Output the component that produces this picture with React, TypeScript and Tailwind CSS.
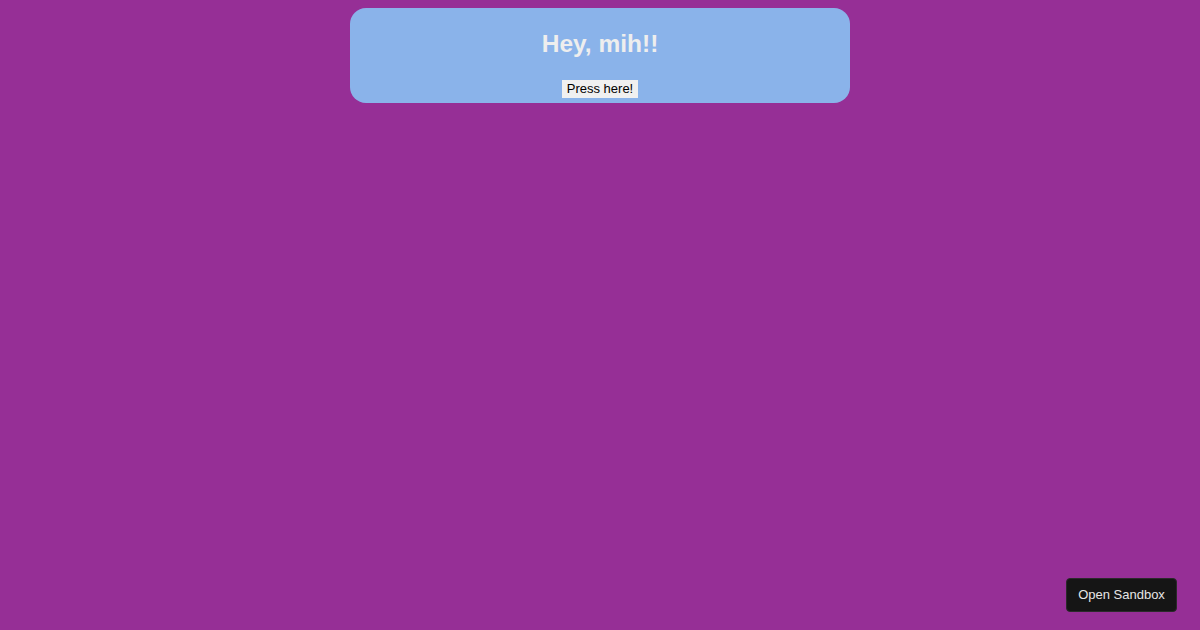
export default function App() {
  return (
    <div className="min-h-[630px] w-full bg-[#962f96] pt-2 font-['Liberation_Sans',Arial,sans-serif]">
      <div className="mx-auto flex h-[95px] w-[500px] flex-col items-center rounded-2xl bg-[#8ab3ea] pt-[22px]">
        <h1 className="h-[28px] text-[24.5px] font-bold leading-[28px] text-[#eeeeee]">Hey, mih!!</h1>
        <button className="mt-[22px] h-[18px] bg-[#f0f0f0] px-[5px] text-[13px] leading-[18px] text-black">
          Press here!
        </button>
      </div>
      <button className="fixed bottom-[18px] right-[23px] flex h-[34px] w-[111px] items-center justify-center rounded-[4px] border border-[#2a2a2a] bg-[#151515] text-[13px] text-[#e6e6e6]">
        Open Sandbox
      </button>
    </div>
  );
}
